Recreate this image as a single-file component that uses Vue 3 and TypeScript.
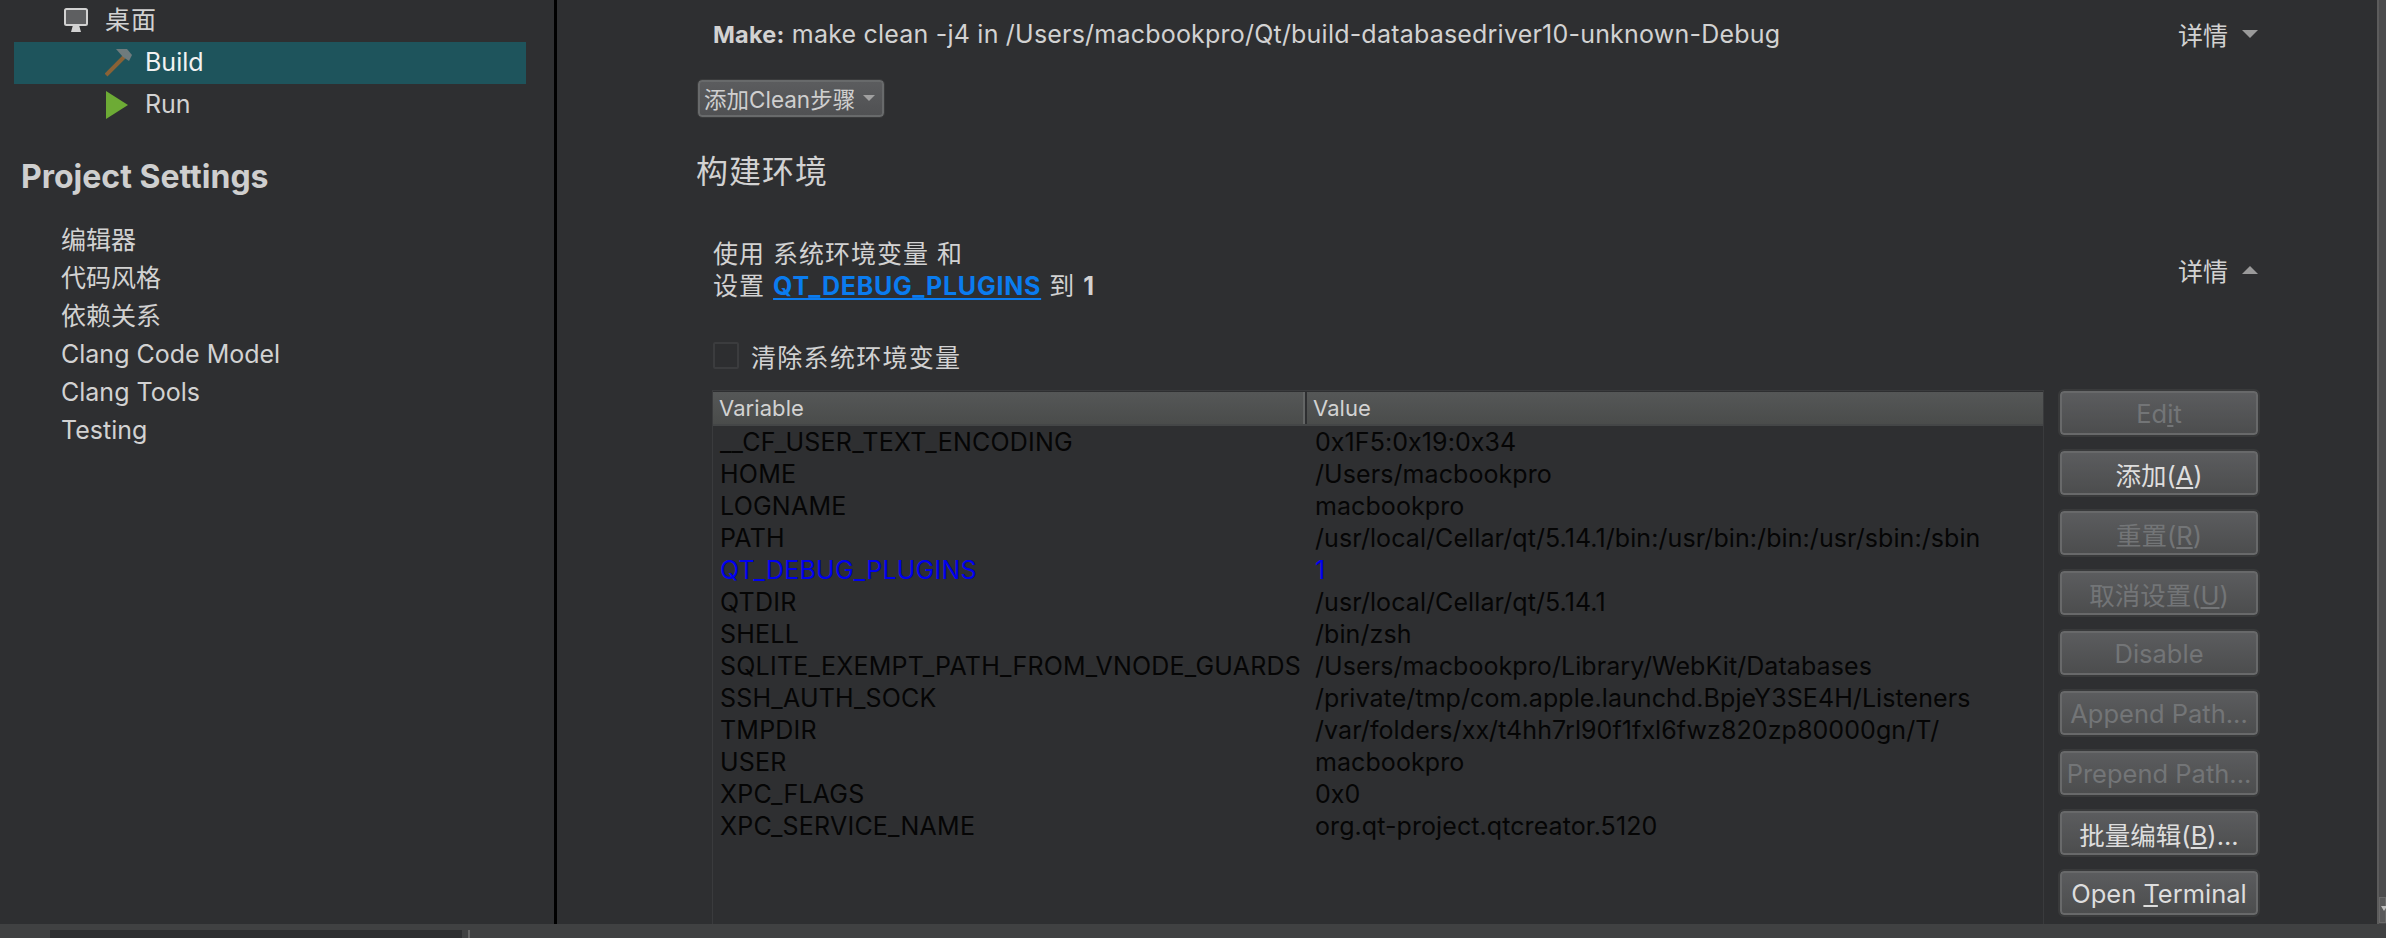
<script setup lang="ts">
interface EnvRow { name: string; value: string; changed?: boolean }
interface Btn { label: string; key?: string; pre?: string; post?: string; disabled?: boolean }

const rows: EnvRow[] = [
  { name: '__CF_USER_TEXT_ENCODING', value: '0x1F5:0x19:0x34' },
  { name: 'HOME', value: '/Users/macbookpro' },
  { name: 'LOGNAME', value: 'macbookpro' },
  { name: 'PATH', value: '/usr/local/Cellar/qt/5.14.1/bin:/usr/bin:/bin:/usr/sbin:/sbin' },
  { name: 'QT_DEBUG_PLUGINS', value: '1', changed: true },
  { name: 'QTDIR', value: '/usr/local/Cellar/qt/5.14.1' },
  { name: 'SHELL', value: '/bin/zsh' },
  { name: 'SQLITE_EXEMPT_PATH_FROM_VNODE_GUARDS', value: '/Users/macbookpro/Library/WebKit/Databases' },
  { name: 'SSH_AUTH_SOCK', value: '/private/tmp/com.apple.launchd.BpjeY3SE4H/Listeners' },
  { name: 'TMPDIR', value: '/var/folders/xx/t4hh7rl90f1fxl6fwz820zp80000gn/T/' },
  { name: 'USER', value: 'macbookpro' },
  { name: 'XPC_FLAGS', value: '0x0' },
  { name: 'XPC_SERVICE_NAME', value: 'org.qt-project.qtcreator.5120' },
]

const buttons: Btn[] = [
  { label: '', pre: 'Ed', key: 'i', post: 't', disabled: true },
  { label: '', pre: '添加(', key: 'A', post: ')' },
  { label: '', pre: '重置(', key: 'R', post: ')', disabled: true },
  { label: '', pre: '取消设置(', key: 'U', post: ')', disabled: true },
  { label: 'Disable', disabled: true },
  { label: 'Append Path...', disabled: true },
  { label: 'Prepend Path...', disabled: true },
  { label: '', pre: '批量编辑(', key: 'B', post: ')...' },
  { label: '', pre: 'Open ', key: 'T', post: 'erminal' },
]

const settings: string[] = ['编辑器', '代码风格', '依赖关系', 'Clang Code Model', 'Clang Tools', 'Testing']
</script>

<template>
  <div class="app">
    <div class="main">
      <aside class="sidebar">
        <div class="kit-row">
          <svg class="monitor" width="24" height="24" viewBox="0 0 24 24">
            <rect x="1" y="1" width="22" height="16" rx="1.5" fill="#5e5f61" stroke="#d2d2d2" stroke-width="2" />
            <path d="M9 17h6l2 7H7z" fill="#d2d2d2" />
          </svg>
          <span>桌面</span>
        </div>
        <div class="step-row selected">
          <svg class="step-icon" width="28" height="28" viewBox="0 0 28 28">
            <path d="M1 26 L19 8" stroke="#8a6236" stroke-width="4" fill="none" />
            <path d="M11 0 H22 L27 6 L24 12 L18 8 Z" fill="#6f7b7d" />
          </svg>
          <span>Build</span>
        </div>
        <div class="step-row">
          <svg class="step-icon" width="28" height="28" viewBox="0 0 28 28">
            <path d="M1 0 L23 14 L1 28 Z" fill="#6dab35" />
          </svg>
          <span>Run</span>
        </div>
        <h2 class="side-title">Project Settings</h2>
        <ul class="side-list">
          <li v-for="item in settings" :key="item">{{ item }}</li>
        </ul>
      </aside>
      <div class="divider"></div>
      <section class="content">
        <div class="panel">
          <div class="make-row">
            <span class="make-text"><b>Make:</b> make clean -j4 in /Users/macbookpro/Qt/build-databasedriver10-unknown-Debug</span>
            <span class="details">详情<i class="tri down"></i></span>
          </div>
          <button class="add-step">
            <span>添加Clean步骤</span>
            <i class="tri small"></i>
          </button>
          <h3 class="heading">构建环境</h3>
          <div class="summary-row">
            <div class="summary">
              <div>使用 系统环境变量 和</div>
              <div>设置 <a class="link">QT_DEBUG_PLUGINS</a> 到 <b>1</b></div>
            </div>
            <span class="details">详情<i class="tri up"></i></span>
          </div>
          <label class="check-row">
            <span class="checkbox"></span>
            <span>清除系统环境变量</span>
          </label>
          <div class="env">
            <div class="table">
              <div class="thead">
                <div class="th first">Variable</div>
                <div class="th second">Value</div>
              </div>
              <div v-for="row in rows" :key="row.name" class="tr" :class="{ changed: row.changed }">
                <div class="td first">{{ row.name }}</div>
                <div class="td second">{{ row.value }}</div>
              </div>
            </div>
            <div class="actions">
              <button v-for="(b, i) in buttons" :key="i" class="action" :class="{ disabled: b.disabled }">
                <template v-if="b.label">{{ b.label }}</template>
                <template v-else>{{ b.pre }}<u>{{ b.key }}</u>{{ b.post }}</template>
              </button>
            </div>
          </div>
        </div>
        <div class="vscroll">
          <div class="vscroll-arrow"><i></i></div>
        </div>
      </section>
    </div>
    <footer class="bottom">
      <div class="bottom-field"></div>
      <div class="bottom-handle"></div>
    </footer>
  </div>
</template>

<style>
html, body { margin: 0; padding: 0; background: #2e2f31; }
</style>

<style scoped>
.app {
  width: 2386px;
  height: 938px;
  display: flex;
  flex-direction: column;
  overflow: hidden;
  background: #2e2f31;
  color: #d2d2d2;
  font-family: Inter, "Noto Sans CJK SC", sans-serif;
  font-size: 25px;
}
.main { display: flex; height: 924px; }
.sidebar { width: 554px; flex: none; }
.divider { width: 3px; flex: none; background: #000; }
.kit-row { display: flex; align-items: center; gap: 17px; height: 42px; padding-left: 64px; box-sizing: border-box; padding-bottom: 6px; letter-spacing: 1px; }
.monitor { flex: none; margin-top: 4px; }
.step-row { display: flex; align-items: center; gap: 12px; height: 42px; width: 512px; margin-left: 14px; padding-left: 91px; box-sizing: border-box; padding-bottom: 2px; }
.step-row .step-icon { margin-top: 2px; }
.step-row.selected { background: #1e545c; color: #f2f2f2; }
.step-icon { flex: none; }
.side-title { margin: 33px 0 0 21px; height: 36px; line-height: 36px; font-size: 32px; font-weight: 700; color: #cfcfcf; }
.side-list { list-style: none; margin: 26px 0 0 61px; padding: 0; }
.side-list li { height: 38px; line-height: 38px; }
.content { flex: 1; display: flex; min-width: 0; }
.panel { flex: 1; min-width: 0; padding: 0 119px 0 139px; }
.make-row { display: flex; justify-content: space-between; align-items: center; height: 68px; padding-left: 17px; }
.make-text { white-space: nowrap; letter-spacing: 0.21px; }
.make-text b { font-weight: 700; font-size: 23.5px; }
.details { display: flex; align-items: center; justify-content: space-between; width: 80px; flex: none; white-space: nowrap; }
.tri { display: block; width: 0; height: 0; border-left: 8px solid transparent; border-right: 8px solid transparent; }
.tri.down { border-top: 8px solid #9a9a9a; }
.tri.up { border-bottom: 8px solid #9a9a9a; }
.tri.small { border-left-width: 6px; border-right-width: 6px; border-top: 6px solid #a0a0a0; margin: 0 0 0 8px; }
.add-step {
  display: flex;
  align-items: center;
  width: 186px;
  height: 37px;
  margin: 12px 0 0 2px;
  padding: 0 0 2px 4px;
  box-sizing: border-box;
  background: linear-gradient(#5b5c5e, #505153);
  border: 2px solid #686a6b;
  border-radius: 4px;
  outline: 1px solid #3a3b3c;
  color: #cfcfcf;
  font: inherit;
  font-size: 22.5px;
  white-space: nowrap;
}
.heading { margin: 41px 0 0; height: 28px; line-height: 28px; font-size: 32px; letter-spacing: 1px; font-weight: 400; color: #d2d2d2; }
.summary-row { display: flex; justify-content: space-between; align-items: center; margin-top: 52px; padding-left: 17px; }
.summary { letter-spacing: 1px; }
.summary div { height: 32px; line-height: 32px; }
.link { color: #0a7cf0; font-weight: 700; letter-spacing: 0.75px; text-decoration: underline; text-underline-offset: 3px; text-decoration-thickness: 2px; }
.check-row { display: flex; align-items: center; gap: 12px; height: 27px; margin: 40px 0 0 17px; letter-spacing: 1.3px; }
.checkbox { display: block; width: 26px; height: 27px; box-sizing: border-box; border: 2px solid #3b3c3e; background: #2d2e30; border-radius: 2px; }
.env { display: flex; gap: 16px; margin: 21px 0 0 16px; }
.table { width: 1332px; height: 534px; box-sizing: border-box; border-left: 1px solid #3a3b3d; border-right: 1px solid #3a3b3d; border-top: 1px solid #3a3b3d; flex: none; color: #050505; font-size: 25px; letter-spacing: 0.08px; }
.thead { display: flex; height: 35px; padding-top: 1px; box-sizing: border-box; border-bottom: 2px solid #444647; color: #d2d2d2; font-size: 22px; }
.th { height: 32px; line-height: 33px; background: linear-gradient(#555757, #4a4c4b); box-sizing: border-box; padding-left: 6px; }
.th.first { width: 592px; border-right: 2px solid #636565; margin-right: 2px; flex: none; }
.th.second { flex: 1; }
.tr { display: flex; height: 32px; line-height: 32px; white-space: nowrap; }
.tr.changed { color: #0000f0; }
.td.first { width: 594px; flex: none; padding-left: 7px; box-sizing: border-box; letter-spacing: 0.22px; }
.td.second { padding-left: 8px; }
.actions { display: flex; flex-direction: column; gap: 16px; width: 198px; flex: none; margin-top: 1px; }
.action {
  display: block;
  width: 198px;
  height: 44px;
  box-sizing: border-box;
  padding: 1px 0 0;
  background: linear-gradient(#5b5c5e, #4c4d4e);
  border: 2px solid #68696a;
  border-radius: 4px;
  outline: 2px solid #393a3b;
  color: #dddddd;
  font: inherit;
  font-size: 25.5px;
  white-space: nowrap;
}
.action.disabled { color: #737577; }
.vscroll { width: 9px; flex: none; box-sizing: border-box; background: #4c4c4d; border-left: 2px solid #5c5c5c; display: flex; flex-direction: column; justify-content: flex-end; padding-bottom: 1px; }
.vscroll-arrow { height: 26px; box-sizing: border-box; background: #5a5a5b; border: 1px solid #6a6a6a; }
.vscroll-arrow i { display: block; width: 0; height: 0; margin: 8px 0 0 1px; border-left: 3px solid transparent; border-right: 3px solid transparent; border-top: 5px solid #bdbdbd; }
.bottom { height: 14px; flex: none; background: #404142; display: flex; align-items: flex-end; padding-left: 50px; gap: 6px; }
.bottom-field { width: 412px; height: 8px; background: #2e2f31; }
.bottom-handle { width: 2px; height: 8px; background: #666; }
</style>
